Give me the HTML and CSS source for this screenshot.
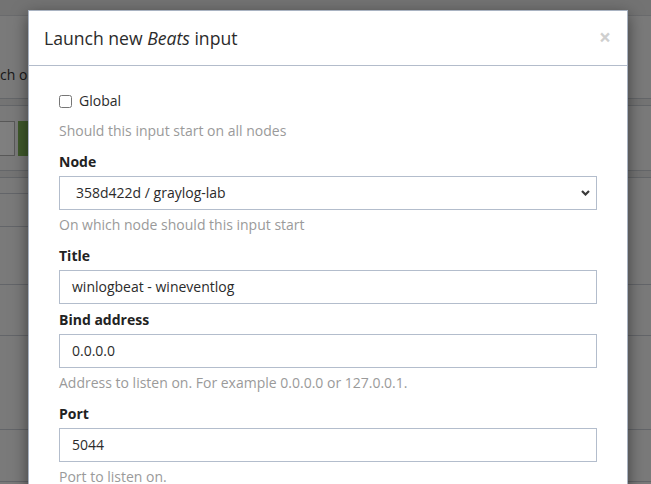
FILE: index.html
```html
<!DOCTYPE html>
<html lang="en">
<head>
<meta charset="utf-8">
<title>Launch new Beats input</title>
<link rel="stylesheet" href="styles.css">
</head>
<body>
<div class="page">
  <div class="topbar"></div>
  <p class="intro">ch or terminate inputs on each node of your cluster.</p>
  <div class="band"></div>
  <div class="toolbar">
    <span class="btn btn-default"></span>
    <span class="btn btn-success"></span>
  </div>
  <div class="band"></div>
  <div class="row r1 short"></div>
  <div class="row r2 short"></div>
  <div class="row r3"></div>
  <div class="row r4"></div>
  <div class="row r5"></div>
  <div class="row r6"></div>
</div>
<div class="backdrop"></div>
<div class="modal">
  <div class="modal-header">
    <h4 class="modal-title">Launch new <em>Beats</em> input</h4>
    <span class="close">&times;</span>
  </div>
  <div class="modal-body">
    <label class="checkbox"><input type="checkbox"> Global</label>
    <p class="help first">Should this input start on all nodes</p>
    <div class="group">
      <div class="label">Node</div>
      <div class="select-wrap">
        <div class="control select">358d422d / graylog-lab</div>
        <svg class="chevron" width="9" height="6" viewBox="0 0 9 6"><path d="M1 1 L4.5 4.5 L8 1" fill="none" stroke="#3a3a3a" stroke-width="2.2"/></svg>
      </div>
      <p class="help">On which node should this input start</p>
    </div>
    <div class="group tight">
      <div class="label">Title</div>
      <div class="control">winlogbeat - wineventlog</div>
    </div>
    <div class="group">
      <div class="label">Bind address</div>
      <div class="control">0.0.0.0</div>
      <p class="help">Address to listen on. For example 0.0.0.0 or 127.0.0.1.</p>
    </div>
    <div class="group">
      <div class="label">Port</div>
      <div class="control">5044</div>
      <p class="help">Port to listen on.</p>
    </div>
  </div>
</div>
</body>
</html>
```
FILE: styles.css
```css
html, body {
  margin: 0;
  padding: 0;
  height: 100%;
  overflow: hidden;
}
body {
  font-family: "Open Sans", "Liberation Sans", sans-serif;
  font-size: 14px;
  color: #222;
  background: #f4f4f4;
  position: relative;
}
.page {
  background: #f4f4f4;
}
.topbar {
  height: 15px;
  background: #e6e6e6;
  border-bottom: 1px solid #d4d6da;
}
.intro {
  margin: 0;
  padding: 49px 0 0 0;
  height: 33px;
  line-height: 20px;
  color: #333;
  font-size: 14px;
  white-space: nowrap;
}
.band {
  height: 6px;
  background: #e8e8e8;
  border-top: 1px solid #c9ccd2;
  border-bottom: 1px solid #c9ccd2;
}
.toolbar {
  display: flex;
  gap: 3px;
  padding-top: 15px;
  height: 64px;
  box-sizing: border-box;
}
.btn {
  display: block;
  height: 35px;
  box-sizing: border-box;
}
.btn-default {
  width: 15px;
  border: 1px solid #b0b0b0;
  border-left: none;
  background: #fff;
}
.btn-success {
  width: 60px;
  background: #7eb356;
}
.row {
  border-bottom: 1px solid #c7cbd3;
}
.row.short {
  width: 300px;
}
.r1 { height: 15px; }
.r2 { height: 32px; }
.r3 { height: 57px; }
.r4 { height: 50px; }
.r5 { height: 93px; }
.r6 { height: 51px; }

.backdrop {
  position: absolute;
  inset: 0;
  background: rgba(0, 0, 0, 0.5);
}
.modal {
  position: absolute;
  left: 28px;
  top: 10px;
  width: 600px;
  height: 600px;
  box-sizing: border-box;
  background: #fff;
  border: 1px solid #a9b3c2;
  box-shadow: 0 5px 15px rgba(0, 0, 0, 0.5);
}
.modal-header {
  display: flex;
  justify-content: space-between;
  align-items: flex-start;
  padding: 15px;
  border-bottom: 1px solid #b3bccb;
}
.modal-title {
  margin: 0;
  font-size: 17.6px;
  line-height: 24px;
  font-weight: normal;
  color: #2b2b2b;
}
.close {
  font-size: 21px;
  font-weight: bold;
  line-height: 18px;
  color: #cfcfcf;
  margin-top: 2px;
  margin-right: 1px;
}
.modal-body {
  padding: 25px 30px 0 30px;
}
.checkbox {
  display: flex;
  align-items: center;
  height: 20px;
  line-height: 20px;
  color: #2b2b2b;
}
.checkbox input {
  margin: 0 7px 0 0;
  width: 13px;
  height: 13px;
}
.help {
  margin: 4px 0 10px;
  padding-top: 1px;
  line-height: 20px;
  color: #9a9a9a;
}
.help.first {
  margin-top: 9px;
}
.label {
  font-weight: bold;
  line-height: 20px;
  padding-top: 1px;
  margin-bottom: 4px;
  color: #222;
}
.group.tight {
  margin-bottom: 5px;
}
.control {
  height: 34px;
  box-sizing: border-box;
  border: 1px solid #b3bdcc;
  padding: 0 12px;
  line-height: 32px;
  color: #2b2b2b;
}
.select-wrap {
  position: relative;
}
.select {
  padding-left: 16px;
}
.chevron {
  position: absolute;
  right: 7px;
  top: 14px;
}
```
